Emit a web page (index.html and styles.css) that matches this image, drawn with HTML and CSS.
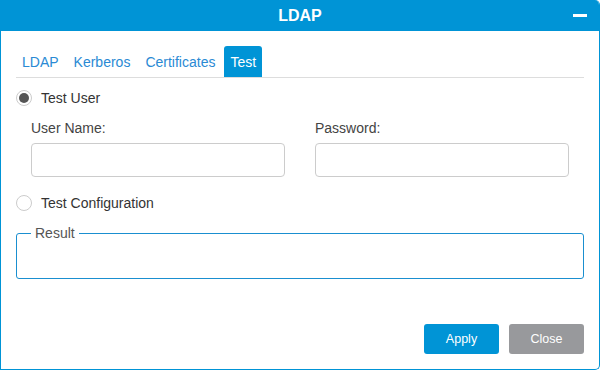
FILE: index.html
```html
<!DOCTYPE html>
<html>
<head>
<meta charset="utf-8">
<link rel="stylesheet" href="styles.css">
</head>
<body>
<div class="window">
  <div class="titlebar">
    <span class="title">LDAP</span>
    <span class="minimize"></span>
  </div>
  <div class="content">
    <div class="tabs">
      <span class="tab">LDAP</span>
      <span class="tab">Kerberos</span>
      <span class="tab">Certificates</span>
      <span class="tab active">Test</span>
    </div>
    <label class="radio-row first">
      <span class="radio checked"></span>
      <span class="radio-text">Test User</span>
    </label>
    <div class="fields">
      <div class="field">
        <div class="field-label">User Name:</div>
        <div class="input"></div>
      </div>
      <div class="field">
        <div class="field-label">Password:</div>
        <div class="input"></div>
      </div>
    </div>
    <label class="radio-row second">
      <span class="radio"></span>
      <span class="radio-text">Test Configuration</span>
    </label>
    <div class="result">
      <span class="legend">Result</span>
    </div>
    <div class="footer">
      <button class="btn apply">Apply</button>
      <button class="btn close">Close</button>
    </div>
  </div>
</div>
</body>
</html>
```
FILE: styles.css
```css
html, body {
  margin: 0;
  padding: 0;
  background: #ffffff;
}
body {
  font-family: "Liberation Sans", Arial, sans-serif;
  color: #333333;
}
.window {
  width: 600px;
  height: 370px;
  box-sizing: border-box;
  border: 1px solid #0094d6;
  border-top: 0;
  border-radius: 0 5px 5px 0;
  display: flex;
  flex-direction: column;
  overflow: hidden;
}
.titlebar {
  position: relative;
  height: 31px;
  flex: none;
  background: #0094d6;
  display: flex;
  align-items: center;
  justify-content: center;
}
.title {
  color: #ffffff;
  font-weight: bold;
  font-size: 16px;
}
.minimize {
  position: absolute;
  right: 12px;
  top: 14px;
  width: 14px;
  height: 3px;
  background: #ffffff;
}
.content {
  flex: 1;
  display: flex;
  flex-direction: column;
  padding: 15px 15px 15px 15px;
}
.tabs {
  display: flex;
  height: 31px;
  border-bottom: 1px solid #dddddd;
  align-items: stretch;
}
.tab {
  display: flex;
  align-items: center;
  padding: 0 6px;
  margin-right: 3px;
  font-size: 14px;
  color: #2a8ad4;
  border-radius: 3px 3px 0 0;
}
.tab.active {
  background: #0094d6;
  color: #ffffff;
}
.radio-row {
  display: flex;
  align-items: center;
  height: 20px;
  font-size: 14px;
  color: #333333;
}
.radio-row.first {
  margin-top: 10px;
}
.radio-row.second {
  margin-top: 16px;
}
.radio {
  width: 16px;
  height: 16px;
  box-sizing: border-box;
  border: 1px solid #cccccc;
  border-radius: 50%;
  margin-right: 9px;
  display: flex;
  align-items: center;
  justify-content: center;
  background: #ffffff;
}
.radio.checked::after {
  content: "";
  width: 10px;
  height: 10px;
  border-radius: 50%;
  background: #555555;
}
.fields {
  display: flex;
  gap: 30px;
  padding-left: 15px;
  margin-top: 12px;
}
.field {
  width: 254px;
}
.field-label {
  font-size: 14px;
  line-height: 16px;
  color: #444444;
}
.input {
  margin-top: 7px;
  height: 34px;
  box-sizing: border-box;
  border: 1px solid #cccccc;
  border-radius: 4px;
  background: #ffffff;
}
.result {
  position: relative;
  margin-top: 20px;
  height: 46px;
  box-sizing: border-box;
  border: 1px solid #1a8fd0;
  border-radius: 3px;
}
.legend {
  position: absolute;
  left: 14px;
  top: -9px;
  padding: 0 4px;
  background: #ffffff;
  font-size: 14px;
  line-height: 16px;
  color: #555555;
}
.footer {
  margin-top: auto;
  display: flex;
  justify-content: flex-end;
  gap: 10px;
}
.btn {
  width: 75px;
  height: 30px;
  border: 0;
  border-radius: 3px;
  color: #ffffff;
  font-family: "Liberation Sans", Arial, sans-serif;
  font-size: 12.5px;
  padding: 0;
}
.btn.apply {
  background: #0094d6;
}
.btn.close {
  background: #98999c;
}
```
